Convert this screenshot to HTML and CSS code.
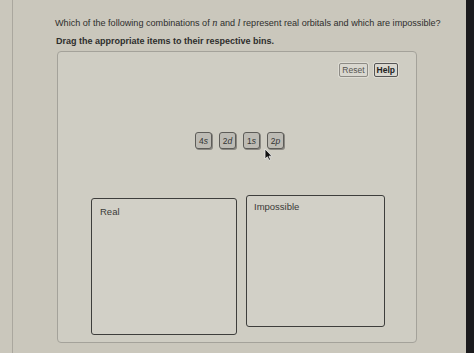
FILE: index.html
```html
<!DOCTYPE html>
<html lang="en">
<head>
    <meta charset="UTF-8">
    <title>Orbitals</title>
    <link rel="stylesheet" href="styles.css">
</head>
<body>
    <div class="screen">
        <div class="page">
            <p class="question">Which of the following combinations of <i class="math">n</i> and <i class="math">l</i> represent real orbitals and which are impossible?</p>
            <p class="instr">Drag the appropriate items to their respective bins.</p>

            <div class="panel">
                <div class="toolbar">
                    <button class="btn">Reset</button>
                    <button class="btn btn-help">Help</button>
                </div>

                <div class="tiles">
                    <div class="tile">4<i>s</i></div>
                    <div class="tile">2<i>d</i></div>
                    <div class="tile">1<i>s</i></div>
                    <div class="tile">2<i>p</i></div>
                    <svg class="cursor" width="9" height="13" viewBox="0 0 9 13">
                        <path d="M1 1 L1 11 L3.4 8.8 L5 12.3 L6.6 11.6 L5 8.2 L8 8.2 Z" fill="#111" stroke="#eee" stroke-width="0.8"/>
                    </svg>
                </div>

                <div class="bins">
                    <div class="bin bin-real">Real</div>
                    <div class="bin bin-impossible">Impossible</div>
                </div>
            </div>
        </div>
        <div class="bezel"></div>
    </div>
</body>
</html>
```

FILE: styles.css
```css
body {
    margin: 0;
    background-color: #cac7bc;
    font-family: 'Liberation Sans', Arial, sans-serif;
    color: #2e2e2c;
}

.screen {
    display: flex;
    height: 353px;
    overflow: hidden;
}

.page {
    flex: 1;
    padding: 17px 0 0 42px;
    margin-left: 12px;
    border-left: 1px solid #aaa79e;
}

.bezel {
    width: 8px;
    background-color: #1b1b1d;
}

.question {
    margin: 0;
    font-size: 9.1px;
}

.math {
    font-family: 'Liberation Serif', serif;
    font-size: 10.3px;
}

.instr {
    margin: 8px 0 0 1px;
    font-size: 9px;
    font-weight: bold;
}

/* drag and drop area */
.panel {
    width: 360px;
    height: 292px;
    margin: 5px 0 0 2px;
    border: 1px solid #a4a29a;
    border-radius: 4px;
    background-color: #cfcdc3;
    box-sizing: border-box;
}

.toolbar {
    display: flex;
    justify-content: flex-end;
    gap: 6px;
    padding: 11px 18px 0 0;
}

.btn {
    font-family: 'Liberation Sans', Arial, sans-serif;
    font-size: 8.5px;
    padding: 1px 2px;
    border: 1px solid #8d8b85;
    border-radius: 2px;
    background-color: #d9d7cf;
    color: #55544f;
    box-shadow: 0 0 0 1px #dedcd4;
}

.btn-help {
    font-weight: bold;
    color: #222;
    border-color: #555;
}

.tiles {
    position: relative;
    display: flex;
    justify-content: center;
    gap: 7px;
    margin-top: 55px;
    padding-left: 5px;
}

.tile {
    width: 17px;
    height: 17px;
    display: flex;
    align-items: center;
    justify-content: center;
    font-size: 8.5px;
    color: #333;
    background-color: #bdbbb4;
    border: 1.5px solid #5d5c58;
    border-radius: 3px;
    box-sizing: border-box;
    box-shadow: 1px 1px 0 #8a8882;
}

.tile i {
    font-style: italic;
}

.cursor {
    position: absolute;
    left: 206px;
    top: 16px;
}

.bins {
    display: flex;
    align-items: flex-start;
    gap: 9px;
    margin-top: 46px;
    padding-left: 33px;
}

.bin {
    border: 1px solid #3e3e3c;
    border-radius: 3px;
    background-color: #d2d0c7;
    font-size: 9.5px;
    color: #3a3a38;
    box-sizing: border-box;
}

.bin-real {
    width: 146px;
    height: 137px;
    margin-top: 3px;
    padding: 7px 0 0 8px;
}

.bin-impossible {
    width: 139px;
    height: 132px;
    padding: 5px 0 0 7px;
}
```
